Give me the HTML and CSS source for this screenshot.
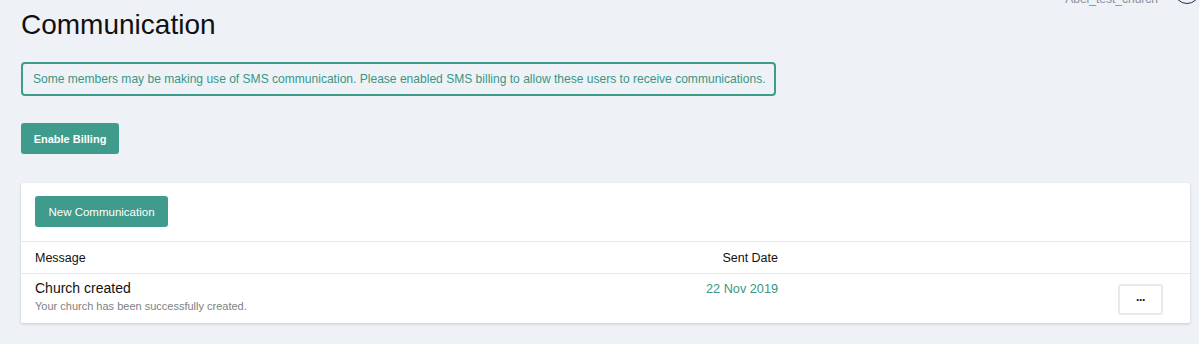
FILE: index.html
```html
<!DOCTYPE html>
<html>
<head>
	<title>Communication</title>
	<link rel="stylesheet" href="styles.css">
</head>
<body>
<div class="user_badge">
	<span class="user_name">Abel_test_church</span>
	<span class="avatar"></span>
</div>

<div class="page">
	<h1 class="title">Communication</h1>

	<!-- warning about sms billing -->
	<div class="alert">
		Some members may be making use of SMS communication. Please enabled SMS billing to allow these users to receive communications.
	</div>

	<div class="billing_row">
		<button class="btn">Enable Billing</button>
	</div>

	<div class="card">
		<div class="card_top">
			<button class="btn">New Communication</button>
		</div>
		<table class="messages">
			<thead>
				<tr>
					<th class="col_message">Message</th>
					<th class="col_date">Sent Date</th>
					<th class="col_actions"></th>
				</tr>
			</thead>
			<tbody>
				<tr>
					<td class="col_message">
						<div class="msg_title">Church created</div>
						<div class="msg_body">Your church has been successfully created.</div>
					</td>
					<td class="col_date date">22 Nov 2019</td>
					<td class="col_actions"><button class="more">&middot;&middot;&middot;</button></td>
				</tr>
			</tbody>
		</table>
	</div>
</div>
</body>
</html>
```

FILE: styles.css
```css
html, body
{
	margin: 0;
	padding: 0;
}
body
{
	background-color: #eef2f7;
	font-family: "Liberation Sans", Arial, sans-serif;
	color: #111111;
	position: relative;
	overflow: hidden;
}
.user_badge
{
	position: absolute;
	top: -22px;
	right: -1px;
	display: flex;
	align-items: flex-end;
	gap: 16px;
}
.user_name
{
	font-size: 12px;
	line-height: 14px;
	margin-bottom: -2px;
	color: #8a8f99;
}
.avatar
{
	width: 24px;
	height: 24px;
	border: 1.5px solid #1d2a5a;
	border-radius: 50%;
}
.page
{
	padding: 8px 9px 20px 21px;
}
.title
{
	margin: 0;
	font-size: 28px;
	font-weight: normal;
	line-height: 34px;
	color: #111111;
}
.alert
{
	margin-top: 20px;
	width: 741px;
	height: 30px;
	display: flex;
	align-items: center;
	padding-left: 10px;
	border: 2px solid #3f9b8b;
	border-radius: 4px;
	color: #3a9685;
	font-size: 12.05px;
	white-space: nowrap;
}
.billing_row
{
	margin-top: 27px;
}
.btn
{
	background-color: #3f9b8b;
	color: #ffffff;
	border: none;
	border-radius: 3px;
	height: 31px;
	padding: 0 13px;
	font-family: "Liberation Sans", Arial, sans-serif;
	font-size: 11px;
	font-weight: bold;
}
.billing_row .btn
{
	width: 98px;
	padding: 0;
}
.card
{
	margin-top: 29px;
	background-color: #ffffff;
	box-shadow: 0px 1px 3px rgba(0, 0, 0, 0.18);
	border-radius: 2px;
}
.card_top
{
	padding: 13px 14px 14px 14px;
	border-bottom: 1px solid #e6e9ee;
}
.card_top .btn
{
	width: 133px;
	padding: 0;
	font-weight: normal;
	font-size: 11.5px;
}
.messages
{
	width: 100%;
	border-collapse: collapse;
}
.messages th
{
	font-weight: normal;
	font-size: 12.5px;
	height: 31px;
	border-bottom: 1px solid #e6e9ee;
	text-align: left;
	padding: 0;
}
.messages td
{
	vertical-align: top;
	padding: 0;
}
.col_message
{
	padding-left: 14px !important;
	width: 400px;
}
.col_date
{
	text-align: right !important;
	width: 343px;
}
.col_actions
{
	text-align: right;
	padding-right: 27px !important;
}
.msg_title
{
	font-size: 14px;
	margin-top: 6px;
}
.msg_body
{
	font-size: 11px;
	color: #7b7f86;
	margin-top: 4px;
	margin-bottom: 11px;
}
.date
{
	color: #3a9685;
	font-size: 12.7px;
	padding-top: 8px !important;
}
.more
{
	margin-top: 10px;
	width: 45px;
	height: 31px;
	background-color: #ffffff;
	border: 2px solid #e7eaef;
	border-radius: 3px;
	font-size: 12px;
	font-weight: bold;
	color: #111111;
	letter-spacing: -1px;
}
```
